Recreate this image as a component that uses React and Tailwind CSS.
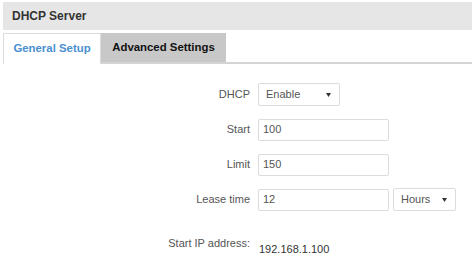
import React from 'react'

/* small filled caret used by the select boxes */
function Caret() {
  return (
    <svg width="5" height="4" viewBox="0 0 5 4" className="shrink-0">
      <path d="M0 0h5L2.5 4z" fill="#333" />
    </svg>
  )
}

function Row({ label, children }) {
  return (
    <div className="flex items-center h-[23px]">
      <div className="w-[250px] text-right text-[11px] text-[#555]">{label}</div>
      <div className="ml-[8px] flex items-center gap-[4px]">{children}</div>
    </div>
  )
}

function Input({ value }) {
  return (
    <div className="w-[131px] h-[22px] border border-[#dcdcdc] rounded-[2px] bg-white flex items-center px-[4px] text-[11px] text-[#555]">
      {value}
    </div>
  )
}

function Select({ value, w }) {
  return (
    <div className={`${w} h-[23px] border border-[#dcdcdc] rounded-[2px] bg-white flex items-center justify-between pl-[7px] pr-[8px] text-[11px] text-[#555]`}>
      <span>{value}</span>
      <Caret />
    </div>
  )
}

export default function App() {
  return (
    <div
      className="w-[474px] h-[258px] bg-white overflow-hidden pt-[2px]"
      style={{ fontFamily: '"Liberation Sans", Arial, sans-serif' }}
    >
      {/* section title */}
      <div className="ml-[3px] mr-[2px] h-[28px] bg-[#e6e6e6] flex items-center pl-[9px] text-[12px] font-bold text-[#333]">
        DHCP Server
      </div>

      {/* tabs */}
      <div className="ml-[3px] mr-[2px] mt-[3px] flex items-end border-b-2 border-[#d4d4d4] h-[31px]">
        <div className="w-[98px] h-[31px] -mb-[2px] bg-white border border-b-0 border-[#dcdcdc] flex items-center justify-center text-[11.4px] font-bold text-[#4a90d0]">
          General Setup
        </div>
        <div className="w-[125px] h-[29px] bg-[#c8c8c8] flex items-center justify-center text-[11.4px] font-bold text-[#111]">
          Advanced Settings
        </div>
      </div>

      {/* form */}
      <div className="mt-[19px] flex flex-col gap-[12px]">
        <Row label="DHCP">
          <Select value="Enable" w="w-[82px]" />
        </Row>
        <Row label="Start">
          <Input value="100" />
        </Row>
        <Row label="Limit">
          <Input value="150" />
        </Row>
        <Row label="Lease time">
          <Input value="12" />
          <Select value="Hours" w="w-[63px]" />
        </Row>
      </div>

      <div className="mt-[24px] flex items-start">
        <div className="w-[250px] text-right text-[11px] text-[#555]">Start IP address:</div>
        <div className="ml-[9px] mt-[6px] text-[11px] text-[#333]">192.168.1.100</div>
      </div>
    </div>
  )
}
